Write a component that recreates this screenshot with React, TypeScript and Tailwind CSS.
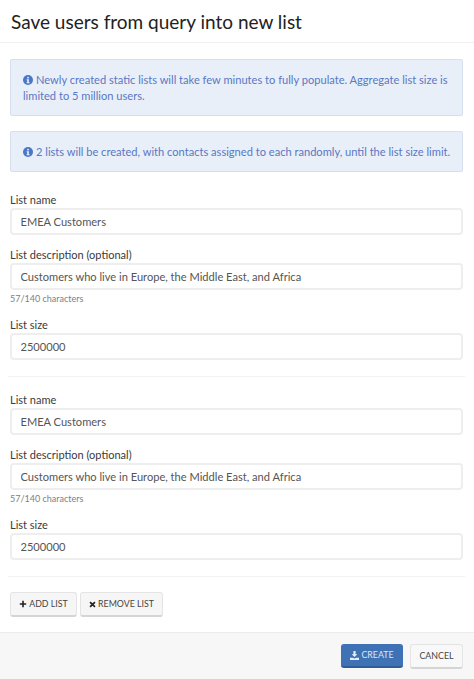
import React from 'react'

const font = "font-['Lato','Liberation_Sans',sans-serif]"

const InfoIcon = () => (
  <svg viewBox="0 0 16 16" className="inline-block w-[10px] h-[10px] mr-[3px] align-[-1px]">
    <circle cx="8" cy="8" r="8" fill="#4a78c8" />
    <rect x="6.8" y="3" width="2.6" height="2.4" fill="#e9eff9" />
    <path d="M5.8 6.6h3.6v5h1.1v1.6H5.8v-1.6h1v-3.4h-1z" fill="#e9eff9" />
  </svg>
)

const Alert = ({ children }: { children: React.ReactNode }) => (
  <div className="bg-[#e9eff9] border border-[#d5dfee] rounded-[2px] pl-3 pr-[8px] py-[11.5px] text-[11.1px] leading-[16px] text-[#5877c4]">
    <InfoIcon />
    {children}
  </div>
)

const Field = ({ label, value, help }: { label: string; value: string; help?: string }) => (
  <div>
    <label className="block text-[11px] leading-[14px] text-[#3a3a3a] mb-[1px]">{label}</label>
    <input
      readOnly
      value={value}
      className="block w-full h-[27px] bg-white border-2 border-[#eeeeee] rounded-[4px] px-[8.5px] text-[11.1px] text-[#555555] outline-none"
    />
    {help && <p className="text-[9px] leading-[12px] text-[#808080] mt-[3px]">{help}</p>}
  </div>
)

const ListForm = () => (
  <div className="flex flex-col gap-[13px] border-b border-[#f2f2f2] pb-[16px] -mx-[2px] px-[2px]">
    <Field label="List name" value="EMEA Customers" />
    <Field label="List description (optional)" value="Customers who live in Europe, the Middle East, and Africa" help="57/140 characters" />
    <Field label="List size" value="2500000" />
  </div>
)

export default function App() {
  return (
    <div className={`${font} w-[474px] h-[679px] bg-white flex flex-col overflow-hidden`}>
      <div className="h-[43px] shrink-0 border-b border-[#f0f0f0] px-[11px] flex items-center">
        <h1 className="text-[19px] text-[#222222] leading-none">Save users from query into new list</h1>
      </div>

      <div className="flex-1 pl-[10px] pt-[16px] pr-[11px]">
        <div className="flex flex-col gap-[15px]">
          <Alert>Newly created static lists will take few minutes to fully populate. Aggregate list size is limited to 5 million users.</Alert>
          <Alert>2 lists will be created, with contacts assigned to each randomly, until the list size limit.</Alert>
        </div>

        <div className="flex flex-col gap-[16px] mt-[21px]">
          <ListForm />
          <ListForm />
        </div>

        <div className="flex gap-[3px] mt-[15px]">
          <button className="h-[25px] w-[67px] rounded-[3px] border border-[#e4e4e4] border-b-2 border-b-[#d5d5d5] bg-[#f6f6f6] text-[8.8px] text-[#444444] flex items-center justify-center gap-[2px]">
            <svg viewBox="0 0 10 10" className="w-[8px] h-[8px]"><path d="M4 1h2v3h3v2H6v3H4V6H1V4h3z" fill="#222" /></svg>
            ADD LIST
          </button>
          <button className="h-[25px] w-[83px] rounded-[3px] border border-[#e4e4e4] border-b-2 border-b-[#d5d5d5] bg-[#f6f6f6] text-[8.8px] text-[#444444] flex items-center justify-center gap-[2px]">
            <svg viewBox="0 0 10 10" className="w-[7px] h-[7px]"><path d="M1.5 1.5l7 7M8.5 1.5l-7 7" stroke="#222" strokeWidth="2.4" /></svg>
            REMOVE LIST
          </button>
        </div>
      </div>

      <div className="h-[47px] shrink-0 bg-[#f7f7f7] border-t border-[#ececec] flex items-center justify-end gap-[7px] pr-[11px]">
        <button className="h-[24px] w-[62px] rounded-[3px] bg-[#3f72b5] border-b-2 border-b-[#2f5c98] text-[8.8px] text-[#dbe6f4] flex items-center justify-center gap-[2px]">
          <svg viewBox="0 0 10 10" className="w-[9px] h-[9px]"><path d="M3.8 0h2.4v3.5h2L5 6.8 1.8 3.5h2zM0 7.4h3l2 1 2-1h3V10H0z" fill="#e6eef8" /></svg>
          CREATE
        </button>
        <button className="h-[25px] w-[53px] rounded-[3px] border border-[#e4e4e4] border-b-2 border-b-[#d5d5d5] bg-[#f8f8f8] text-[8.8px] text-[#444444]">CANCEL</button>
      </div>
    </div>
  )
}
